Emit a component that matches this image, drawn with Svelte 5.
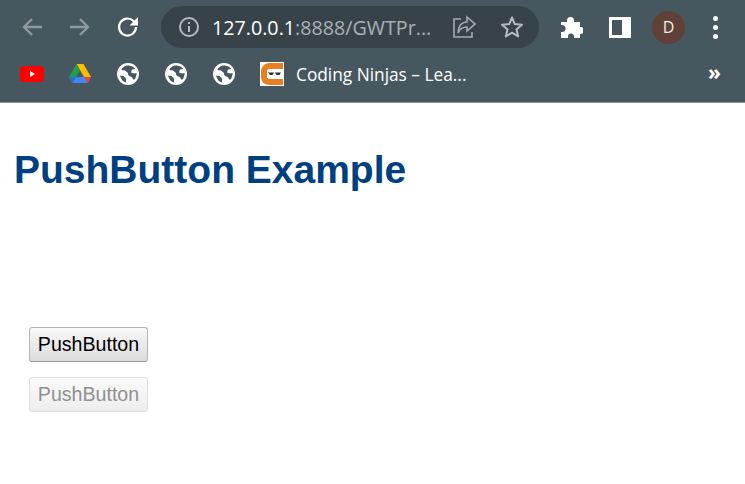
<script>
  const bookmarks = [1, 2, 3];
</script>

<div class="browser">
  <div class="toolbar">
    <div class="nav">
      <svg class="icon" viewBox="0 0 24 24"><path d="M22 12H4M12 4l-8 8 8 8" class="dim" /></svg>
      <svg class="icon" viewBox="0 0 24 24"><path d="M2 12h18M12 4l8 8-8 8" class="dim" /></svg>
      <svg class="icon" viewBox="0 0 24 24">
        <path d="M20 12a8.500 8.500 0 1 1-2.500-6L20 8.500" class="bright" />
        <path d="M22 2v8.500h-8.500z" fill="#fff" />
      </svg>
    </div>
    <div class="omnibox">
      <svg class="info" viewBox="0 0 22 22">
        <circle cx="11" cy="11" r="9" fill="none" stroke="#b4babd" stroke-width="2" />
        <path d="M10 10h2v6h-2zM10 6h2v2h-2z" fill="#b4babd" />
      </svg>
      <span class="url"><span class="host">127.0.0.1</span>:8888/GWTPr...</span>
      <svg class="share" viewBox="0 0 24 24" fill="none" stroke="#a5acb0" stroke-width="1.600">
        <path d="M9 4H2v18h18v-5" />
        <path d="M15 2l8 7-8 7v-4c-4 0-7 1-9 6 0-6 3-11 9-11z" />
      </svg>
      <svg class="star" viewBox="0 0 24 24"><path d="M12 2.500l2.800 6.600 7.200.6-5.500 4.700 1.700 7-6.200-3.700-6.200 3.700 1.700-7L2 9.700l7.200-.6z" fill="none" stroke="#b4babd" stroke-width="2" stroke-linejoin="round" /></svg>
    </div>
    <div class="actions">
      <svg class="puzzle" viewBox="0 0 22 22"><path d="M0 6h6V4.500a3.500 3.500 0 1 1 7 0V6h6v5h.5a3.500 3.500 0 1 1 0 7H19v4h-6v-1.500a3 3 0 1 0-6 0V22H0v-6h1a3.500 3.500 0 1 0 0-7H0z" fill="#fff" /></svg>
      <div class="panel"><div class="panel-hole"></div></div>
      <div class="avatar">D</div>
      <div class="dots"><i></i><i></i><i></i></div>
    </div>
  </div>

  <div class="bookmarks">
    <div class="yt"><svg viewBox="0 0 24 16" width="24" height="16"><rect width="24" height="16" rx="4" fill="#f00" /><path d="M10 5l5 3-5 3z" fill="#fff" /></svg></div>
    <svg class="drive" viewBox="0 0 22 20" width="22" height="20">
      <path d="M7.500 0h7l7.500 13h-7z" fill="#fbbc04" />
      <path d="M7.500 0L0 13l3.500 6L11 6.500z" fill="#1e9e55" />
      <path d="M3.500 19L7 13h15l-3.500 6z" fill="#4285f4" />
      <path d="M0 13h7l-3.500 6z" fill="#2a6fc9" />
      <path d="M15 13h7l-3.500 6z" fill="#ea4335" />
    </svg>
    {#each bookmarks as b}
      <svg class="globe" viewBox="0 0 22 22" width="22" height="22">
        <circle cx="11" cy="11" r="11" fill="#fff" />
        <path d="M12 2.500c3 .5 5 1.500 6.500 3.500L15 6.500l-1 3 3 1 2.500-.5c.3 3-1 5.500-2.500 7l-2.500-3-3-1.500-1-3-2.500-2-3.500-.5C5 4.500 8 2.500 12 2.500z" fill="#47575f" />
        <path d="M3 12.500l3.500.5 2.500 2.500v4C6 19 4 16 3 12.500z" fill="#47575f" />
      </svg>
    {/each}
    <div class="ninja">
      <svg viewBox="0 0 24 24" width="24" height="24">
        <rect width="24" height="24" fill="#fff" />
        <path d="M9 1h14v6H10c-2 0-3 1-3 3v4c0 2 1 3 3 3h13v6H9c-4 0-8-3-8-8V9c0-4 4-8 8-8z" fill="#e87f22" />
        <path d="M7 8h16v8H7z" fill="#fff" />
        <path d="M8 10.500h6l-1.500 2.500H10zM15 10.500h6L19.500 13h-3z" fill="#333" />
      </svg>
    </div>
    <span class="bm-label">Coding Ninjas – Lea...</span>
    <span class="more">»</span>
  </div>
</div>

<main>
  <h1>PushButton Example</h1>
  <div class="buttons">
    <button>PushButton</button>
    <button disabled>PushButton</button>
  </div>
</main>

<style>
  :global(body) {
    margin: 0;
    background: #fff;
  }
  .browser {
    background: #47575f;
    border-bottom: 1px solid #87939a;
    height: 102px;
    overflow: hidden;
  }
  .toolbar {
    display: flex;
    align-items: center;
    height: 54px;
  }
  .nav {
    display: flex;
    align-items: center;
    gap: 24px;
    padding-left: 20px;
    width: 141px;
    box-sizing: border-box;
  }
  .icon {
    width: 24px;
    height: 24px;
    flex: none;
  }
  .dim {
    fill: none;
    stroke: #8f9a9f;
    stroke-width: 2.400;
  }
  .bright {
    fill: none;
    stroke: #fff;
    stroke-width: 2.200;
  }
  .omnibox {
    display: flex;
    align-items: center;
    width: 378px;
    height: 42px;
    margin-left: 20px;
    border-radius: 21px;
    background: #384349;
    box-sizing: border-box;
    padding-left: 17px;
    flex: none;
  }
  .info {
    width: 22px;
    height: 22px;
    flex: none;
  }
  .url {
    margin-left: 12px;
    width: 240px;
    font: 19.700px "Open Sans", sans-serif;
    color: #aab1b5;
    white-space: nowrap;
  }
  .host {
    color: #fff;
  }
  .share {
    width: 24px;
    height: 24px;
    flex: none;
  }
  .star {
    width: 24px;
    height: 24px;
    margin-left: 24px;
    flex: none;
  }
  .actions {
    display: flex;
    align-items: center;
    margin-left: 22px;
  }
  .puzzle {
    width: 22px;
    height: 22px;
  }
  .panel {
    width: 22px;
    height: 21px;
    margin-left: 26px;
    background: #fff;
    display: flex;
    padding: 3px 9px 3px 3px;
    box-sizing: border-box;
  }
  .panel-hole {
    flex: 1;
    background: #47575f;
  }
  .avatar {
    width: 33px;
    height: 33px;
    margin-left: 21px;
    border-radius: 50%;
    background: #5f4137;
    color: #eee;
    font: 16px "Open Sans", sans-serif;
    display: flex;
    align-items: center;
    justify-content: center;
  }
  .dots {
    display: flex;
    flex-direction: column;
    gap: 4px;
    margin-left: 28px;
  }
  .dots i {
    display: block;
    width: 5px;
    height: 5px;
    border-radius: 50%;
    background: #fff;
  }
  .bookmarks {
    display: flex;
    align-items: center;
    height: 42px;
    margin-top: -1px;
    padding-left: 20px;
    color: #fff;
  }
  .yt {
    width: 24px;
    height: 16px;
    display: flex;
  }
  .drive {
    margin-left: 25px;
  }
  .globe {
    margin-left: 26px;
  }
  .ninja {
    margin-left: 25px;
    height: 24px;
  }
  .bm-label {
    margin-left: 12px;
    font: 17.300px "Open Sans", sans-serif;
    white-space: nowrap;
    width: 172px;
  }
  .more {
    margin-left: 240px;
    font: bold 21px "Open Sans", sans-serif;
    line-height: 20px;
    margin-top: -4px;
  }
  main {
    padding: 0 14px;
  }
  h1 {
    margin: 45px 0 0;
    font: bold 39px/44px "Liberation Sans", Arial, sans-serif;
    color: #004080;
  }
  .buttons {
    display: flex;
    flex-direction: column;
    align-items: flex-start;
    gap: 15px;
    margin: 135px 0 0 15px;
  }
  button {
    width: 119px;
    height: 35px;
    padding: 0;
    border: 1px solid #b5b5b5;
    border-bottom-color: #9a9a9a;
    border-radius: 3px;
    background: linear-gradient(#f8f8f8, #dcdcdc);
    font: 19.600px "Liberation Sans", Arial, sans-serif;
    color: #000;
  }
  button:disabled {
    border-color: #dedede;
    background: linear-gradient(#fafafa, #eeeeee);
    color: #909090;
  }
</style>
